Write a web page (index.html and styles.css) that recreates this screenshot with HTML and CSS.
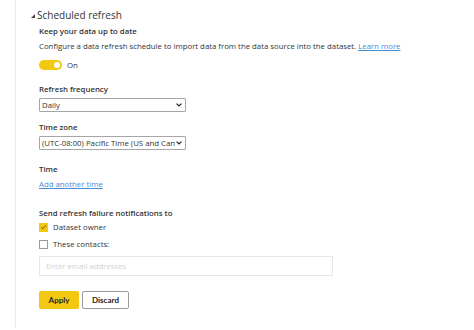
FILE: index.html
```html
<!DOCTYPE html>
<html lang="en">
<head>
    <meta charset="UTF-8">
    <meta name="viewport" content="width=device-width, initial-scale=1.0">
    <title>Scheduled refresh</title>
    <link rel="stylesheet" href="styles.css">
</head>
<body>
    <!-- Settings panel with the grey rule on the left -->
    <div class="panel">
        <div class="section-title">
            <span class="caret"></span>
            <span>Scheduled refresh</span>
        </div>

        <div class="section-body">
            <div class="label">Keep your data up to date</div>
            <p class="hint">Configure a data refresh schedule to import data from the data source into the dataset. <a href="#">Learn more</a></p>

            <!-- Toggle switch -->
            <div class="toggle-row">
                <span class="toggle"><span class="knob"></span></span>
                <span>On</span>
            </div>

            <div class="label">Refresh frequency</div>
            <div class="select-wrap">
                <select class="dropdown">
                    <option>Daily</option>
                </select>
                <svg class="chevron" width="6" height="4" viewBox="0 0 6 4"><path d="M0.6 0.6 L3 3 L5.4 0.6" fill="none" stroke="#222" stroke-width="1.2"/></svg>
            </div>

            <div class="label">Time zone</div>
            <div class="select-wrap tz">
                <select class="dropdown">
                    <option>(UTC-08:00) Pacific Time (US and Canada)</option>
                </select>
                <svg class="chevron" width="6" height="4" viewBox="0 0 6 4"><path d="M0.6 0.6 L3 3 L5.4 0.6" fill="none" stroke="#222" stroke-width="1.2"/></svg>
            </div>

            <div class="label">Time</div>
            <a href="#" class="add-link">Add another time</a>

            <div class="label notify">Send refresh failure notifications to</div>
            <div class="check-row">
                <span class="box checked">
                    <svg width="8" height="8" viewBox="0 0 8 8"><path d="M1.2 4.2 L3.2 6 L6.8 2" fill="none" stroke="#444" stroke-width="1"/></svg>
                </span>
                <span>Dataset owner</span>
            </div>
            <div class="check-row">
                <span class="box"></span>
                <span>These contacts:</span>
            </div>
            <input type="text" class="email" placeholder="Enter email addresses">

            <!-- Buttons -->
            <div class="buttons">
                <button class="btn apply">Apply</button>
                <button class="btn discard">Discard</button>
            </div>
        </div>
    </div>
</body>
</html>
```

FILE: styles.css
```css
/* Base page */
body {
    margin: 0;
    background: #ffffff;
    color: #333333;
    font-family: "Open Sans", "Noto Sans", sans-serif;
    font-size: 7.8px;
}

/* Panel with light left border */
.panel {
    margin-left: 15px;
    border-left: 1px solid #ececec;
    padding: 7px 0 19px 14px;
    width: 440px;
}

/* Section header */
.section-title {
    display: flex;
    align-items: center;
    font-size: 10px;
    color: #333;
    height: 16px;
}

.caret {
    width: 0;
    height: 0;
    border-left: 4px solid transparent;
    border-bottom: 4px solid #444;
    margin: 2px 2px 0 1px;
}

.section-body {
    padding-left: 9px;
    display: flex;
    flex-direction: column;
    align-items: flex-start;
}

.label {
    font-weight: 600;
    margin-top: 1px;
    line-height: 14px;
}

.hint {
    margin: 3px 0 0;
    line-height: 11px;
}

a {
    color: #4a8ad6;
}

/* Toggle */
.toggle-row {
    display: flex;
    align-items: center;
    gap: 5px;
    margin: 8px 0 11px;
}

.toggle {
    width: 23px;
    height: 10px;
    border-radius: 5px;
    background: #f2c811;
    display: flex;
    justify-content: flex-end;
    align-items: center;
    padding: 0 2px;
    box-sizing: border-box;
}

.knob {
    width: 6px;
    height: 6px;
    border-radius: 50%;
    background: #fff;
}

/* Dropdowns */
.select-wrap {
    position: relative;
    margin: 2px 0 7px;
}

.select-wrap.tz {
    margin-bottom: 11px;
}

.dropdown {
    display: block;
    width: 147px;
    height: 14px;
    padding: 0 10px 0 2px;
    font-family: inherit;
    font-size: 7.8px;
    color: #333;
    border: 1px solid #a6a6a6;
    border-radius: 1px;
    background: #fff;
    appearance: none;
    -webkit-appearance: none;
}

.chevron {
    position: absolute;
    right: 4px;
    top: 5px;
}

.add-link {
    margin-top: 2px;
    line-height: 12px;
}

.notify {
    margin-top: 16px;
}

/* Checkboxes */
.check-row {
    display: flex;
    align-items: center;
    gap: 5px;
    margin-top: 1px;
    line-height: 12px;
}

.check-row + .check-row {
    margin-top: 5px;
}

.box {
    width: 9px;
    height: 9px;
    border: 1px solid #9a9a9a;
    box-sizing: border-box;
    display: flex;
    align-items: center;
    justify-content: center;
}

.box.checked {
    background: #f2c811;
    border-color: #f2c811;
}

.email {
    width: 294px;
    height: 20px;
    margin-top: 6px;
    box-sizing: border-box;
    border: 1px solid #e6e6e6;
    padding: 0 6px;
    font-family: inherit;
    font-size: 7.8px;
}

.email::placeholder {
    color: #d2d2d2;
}

/* Buttons */
.buttons {
    display: flex;
    gap: 3px;
    margin-top: 15px;
}

.btn {
    height: 18px;
    font-family: "Lato", sans-serif;
    font-weight: 700;
    font-size: 8px;
    color: #252423;
    border-radius: 2px;
    cursor: pointer;
}

.apply {
    width: 40px;
    background: #f2c811;
    border: none;
}

.discard {
    width: 47px;
    background: #fff;
    border: 1px solid #9a9a9a;
}
```
